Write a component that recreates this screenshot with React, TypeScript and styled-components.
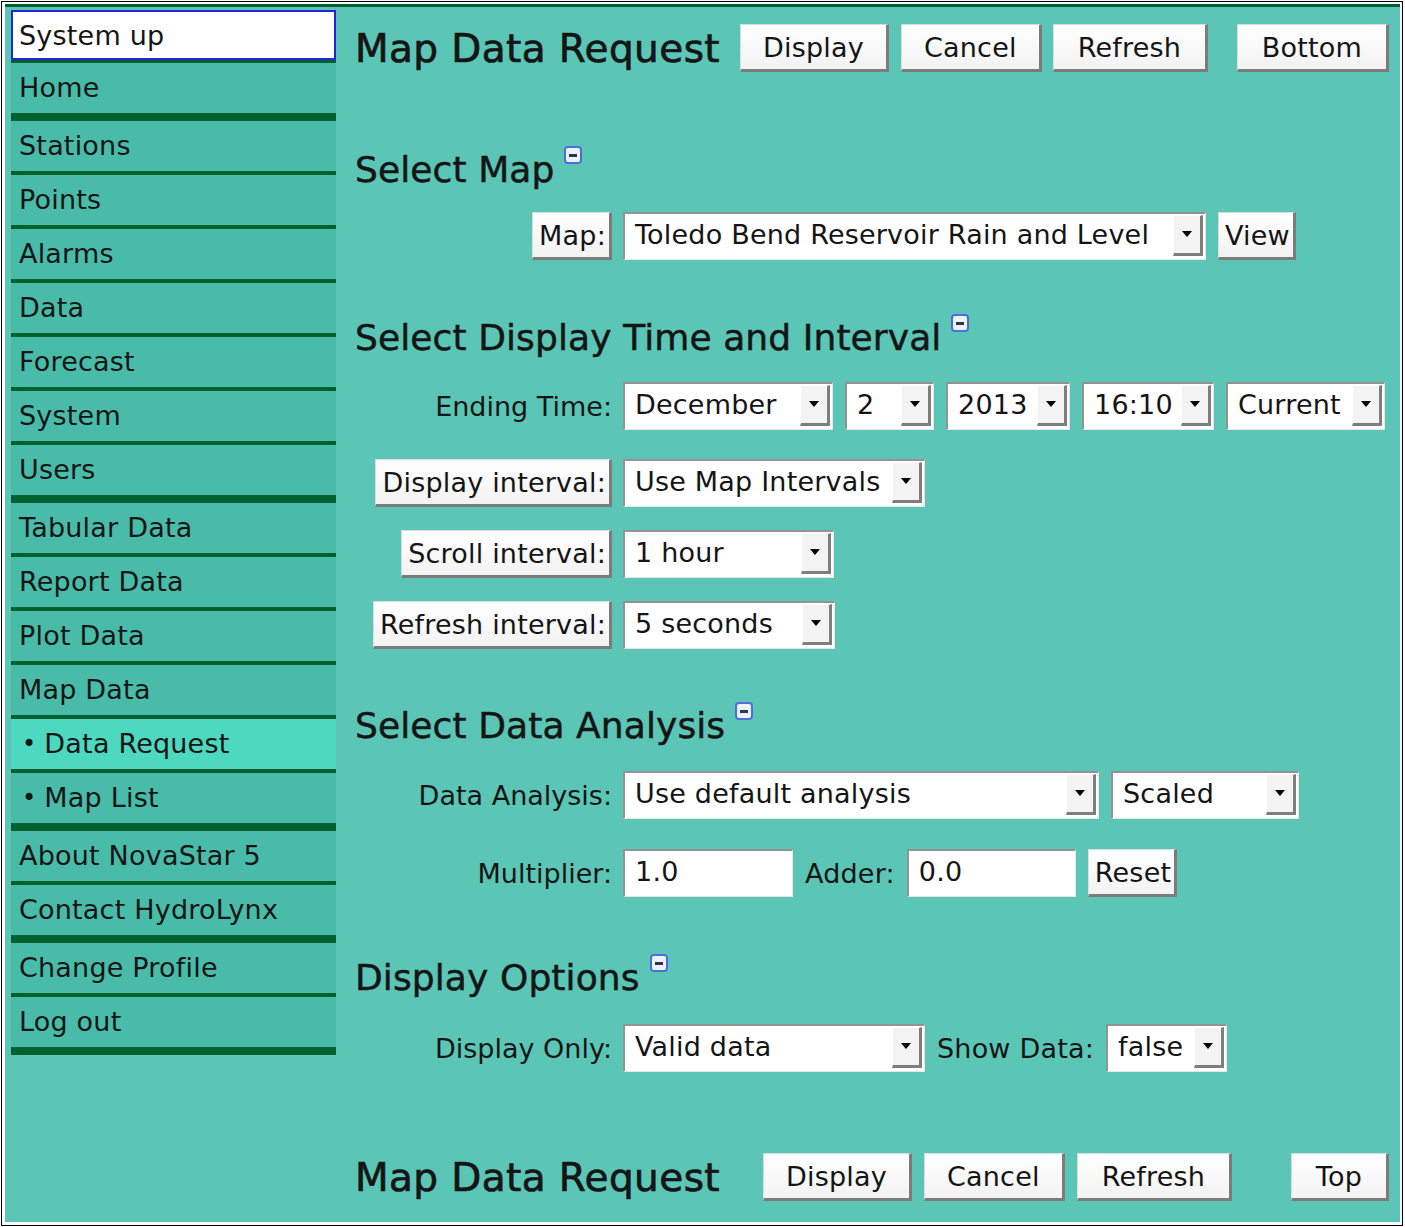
import React, { FC } from 'react';
import styled, { createGlobalStyle } from 'styled-components';

const palette = {
  teal: '#5bc6b5',
  item: '#48bca8',
  active: '#4dd9bf',
  rule: '#00602f',
  ink: '#151515',
};

const GlobalStyle = createGlobalStyle`
  html, body {
    margin: 0;
    padding: 0;
    background: #fff;
  }
  body {
    font-family: "DejaVu Sans", Verdana, sans-serif;
    color: ${palette.ink};
    letter-spacing: 0.2px;
  }
`;

const Frame = styled.div`
  box-sizing: border-box;
  width: 1402px;
  height: 1225px;
  margin: 1px 0 0 1px;
  border: 1px solid #000;
  padding: 2px 2px 3px 3px;
  background: #fff;
`;

const Panel = styled.div`
  box-sizing: border-box;
  height: 100%;
  display: flex;
  align-items: flex-start;
  background: ${palette.teal};
  border-top: 3px solid ${palette.rule};
`;

const Sidebar = styled.nav`
  flex: none;
  width: 325px;
  margin: 3px 0 0 6px;
  display: flex;
  flex-direction: column;
`;

const StatusCell = styled.div`
  border-bottom: 3px solid ${palette.rule};
`;

const StatusBox = styled.div`
  box-sizing: border-box;
  height: 50px;
  display: flex;
  align-items: center;
  padding-left: 6px;
  background: #fff;
  border: 2px solid #2424d6;
  font-size: 27px;
`;

const NavItem = styled.div<{ $thick?: boolean; $active?: boolean; $sub?: boolean }>`
  box-sizing: border-box;
  height: ${(p) => (p.$thick ? 58 : 54)}px;
  display: flex;
  align-items: center;
  padding: 0 0 1px ${(p) => (p.$sub ? 11 : 8)}px;
  background: ${(p) => (p.$active ? palette.active : palette.item)};
  border-bottom: ${(p) => (p.$thick ? 8 : 4)}px solid ${palette.rule};
  font-size: 27px;
  white-space: nowrap;
`;

const Bullet = styled.span`
  margin-right: 8px;
  font-size: 24px;
`;

const Main = styled.main`
  flex: 1;
  margin-left: 19px;
  padding: 17px 11px 0 0;
`;

const HeaderRow = styled.div<{ $top?: number }>`
  display: flex;
  align-items: center;
  height: 48px;
  margin-top: ${(p) => p.$top ?? 0}px;
`;

const Title = styled.h1`
  margin: 0;
  font-size: 39px;
  font-weight: normal;
  letter-spacing: 0.4px;
  line-height: 1;
  white-space: nowrap;
  -webkit-text-stroke: 0.7px ${palette.ink};
`;

const Button = styled.button<{ $lead?: number; $push?: boolean }>`
  box-sizing: border-box;
  height: 48px;
  margin: 0 0 0 ${(p) => (p.$push ? 'auto' : `${p.$lead ?? 0}px`)};
  padding: 0 22px;
  font-family: inherit;
  font-size: 27px;
  letter-spacing: 0.2px;
  color: ${palette.ink};
  background: linear-gradient(#ffffff, #f2f2f2);
  border-style: solid;
  border-width: 1px 3px 3px 1px;
  border-color: #dcdcdc #7c7c7c #7c7c7c #dcdcdc;
  white-space: nowrap;
  cursor: pointer;
`;

const WideButton = styled(Button)`
  padding: 0 24px;
`;

const TightButton = styled(Button)`
  padding: 0 3px 0 6px;
`;

const LabelButton = styled(TightButton)`
  justify-self: end;
`;

const Heading = styled.h2<{ $top: number }>`
  display: flex;
  align-items: flex-start;
  height: 40px;
  margin: ${(p) => p.$top}px 0 0;
  font-size: 36px;
  font-weight: normal;
  letter-spacing: 0.1px;
  line-height: 40px;
  white-space: nowrap;
  -webkit-text-stroke: 0.5px ${palette.ink};
`;

const Toggle = styled.svg`
  flex: none;
  margin: -4px 0 0 10px;
`;

const FormRow = styled.div<{ $top: number }>`
  display: grid;
  grid-template-columns: 257px 1fr;
  column-gap: 11px;
  align-items: center;
  height: 48px;
  margin-top: ${(p) => p.$top}px;
`;

const Label = styled.span`
  justify-self: end;
  font-size: 27px;
  letter-spacing: 0;
  white-space: nowrap;
`;

const Controls = styled.div`
  display: flex;
  align-items: center;
  gap: 12px;
`;

const InlineText = styled.span`
  font-size: 27px;
  white-space: nowrap;
`;

const SelectBox = styled.div<{ $w: number }>`
  box-sizing: border-box;
  flex: none;
  width: ${(p) => p.$w}px;
  height: 48px;
  display: flex;
  background: #fff;
  border-style: solid;
  border-width: 2px 1px 1px 2px;
  border-color: #939393 #e6e6e6 #e6e6e6 #939393;
  font-size: 27px;
`;

const SelectText = styled.span`
  flex: 1;
  display: flex;
  align-items: center;
  padding: 0 0 4px 10px;
  white-space: nowrap;
  overflow: hidden;
`;

const SelectArrow = styled.span`
  box-sizing: border-box;
  flex: none;
  width: 30px;
  margin: 1px 2px 3px 0;
  display: flex;
  justify-content: center;
  padding-top: 15px;
  background: #f3f3f3;
  border-style: solid;
  border-width: 1px 3px 3px 1px;
  border-color: #ffffff #7e7e7e #7e7e7e #ffffff;

  &::after {
    content: '';
    width: 0;
    height: 0;
    border-left: 5px solid transparent;
    border-right: 5px solid transparent;
    border-top: 6px solid #000;
  }
`;

const TextInput = styled.input<{ $w: number }>`
  box-sizing: border-box;
  flex: none;
  width: ${(p) => p.$w}px;
  height: 48px;
  padding: 0 10px 4px;
  font-family: inherit;
  font-size: 27px;
  letter-spacing: 0.2px;
  color: ${palette.ink};
  background: #fff;
  border-style: solid;
  border-width: 2px 1px 1px 2px;
  border-color: #939393 #e6e6e6 #e6e6e6 #939393;
  outline: none;
`;

const Select: FC<{ w: number; value: string }> = ({ w, value }) => (
  <SelectBox $w={w}>
    <SelectText>{value}</SelectText>
    <SelectArrow />
  </SelectBox>
);

const CollapseIcon: FC = () => (
  <Toggle width="18" height="18" viewBox="0 0 18 18">
    <rect x="1" y="1" width="16" height="16" rx="3" fill="#eef1ff" stroke="#4d6fdc" strokeWidth="2" />
    <rect x="5" y="8" width="8" height="3" fill="#2b3550" />
  </Toggle>
);

const navItems: { label: string; thick?: boolean; active?: boolean; sub?: boolean }[] = [
  { label: 'Home', thick: true },
  { label: 'Stations' },
  { label: 'Points' },
  { label: 'Alarms' },
  { label: 'Data' },
  { label: 'Forecast' },
  { label: 'System' },
  { label: 'Users', thick: true },
  { label: 'Tabular Data' },
  { label: 'Report Data' },
  { label: 'Plot Data' },
  { label: 'Map Data' },
  { label: 'Data Request', sub: true, active: true },
  { label: 'Map List', sub: true, thick: true },
  { label: 'About NovaStar 5' },
  { label: 'Contact HydroLynx', thick: true },
  { label: 'Change Profile' },
  { label: 'Log out', thick: true },
];

const App: FC = () => {
  return (
    <Frame>
      <GlobalStyle />
      <Panel>
        <Sidebar>
          <StatusCell>
            <StatusBox>System up</StatusBox>
          </StatusCell>
          {navItems.map((item) => (
            <NavItem key={item.label} $thick={item.thick} $active={item.active} $sub={item.sub}>
              {item.sub && <Bullet>•</Bullet>}
              {item.label}
            </NavItem>
          ))}
        </Sidebar>

        <Main>
          <HeaderRow>
            <Title>Map Data Request</Title>
            <Button $lead={20}>Display</Button>
            <Button $lead={12}>Cancel</Button>
            <WideButton $lead={11}>Refresh</WideButton>
            <WideButton $push>Bottom</WideButton>
          </HeaderRow>

          <Heading $top={78}>
            Select Map
            <CollapseIcon />
          </Heading>
          <FormRow $top={22}>
            <LabelButton>Map:</LabelButton>
            <Controls>
              <Select w={583} value="Toledo Bend Reservoir Rain and Level" />
              <TightButton>View</TightButton>
            </Controls>
          </FormRow>

          <Heading $top={58}>
            Select Display Time and Interval
            <CollapseIcon />
          </Heading>
          <FormRow $top={24}>
            <Label>Ending Time:</Label>
            <Controls>
              <Select w={210} value="December" />
              <Select w={89} value="2" />
              <Select w={124} value="2013" />
              <Select w={132} value="16:10" />
              <Select w={159} value="Current" />
            </Controls>
          </FormRow>
          <FormRow $top={29}>
            <LabelButton>Display interval:</LabelButton>
            <Controls>
              <Select w={302} value="Use Map Intervals" />
            </Controls>
          </FormRow>
          <FormRow $top={23}>
            <LabelButton>Scroll interval:</LabelButton>
            <Controls>
              <Select w={211} value="1 hour" />
            </Controls>
          </FormRow>
          <FormRow $top={23}>
            <LabelButton>Refresh interval:</LabelButton>
            <Controls>
              <Select w={212} value="5 seconds" />
            </Controls>
          </FormRow>

          <Heading $top={57}>
            Select Data Analysis
            <CollapseIcon />
          </Heading>
          <FormRow $top={25}>
            <Label>Data Analysis:</Label>
            <Controls>
              <Select w={476} value="Use default analysis" />
              <Select w={188} value="Scaled" />
            </Controls>
          </FormRow>
          <FormRow $top={30}>
            <Label>Multiplier:</Label>
            <Controls>
              <TextInput $w={170} defaultValue="1.0" />
              <InlineText>Adder:</InlineText>
              <TextInput $w={169} defaultValue="0.0" />
              <TightButton>Reset</TightButton>
            </Controls>
          </FormRow>

          <Heading $top={61}>
            Display Options
            <CollapseIcon />
          </Heading>
          <FormRow $top={26}>
            <Label>Display Only:</Label>
            <Controls>
              <Select w={302} value="Valid data" />
              <InlineText>Show Data:</InlineText>
              <Select w={121} value="false" />
            </Controls>
          </FormRow>

          <HeaderRow $top={81}>
            <Title>Map Data Request</Title>
            <Button $lead={43}>Display</Button>
            <Button $lead={12}>Cancel</Button>
            <WideButton $lead={12}>Refresh</WideButton>
            <WideButton $push>Top</WideButton>
          </HeaderRow>
        </Main>
      </Panel>
    </Frame>
  );
};

export default App;
